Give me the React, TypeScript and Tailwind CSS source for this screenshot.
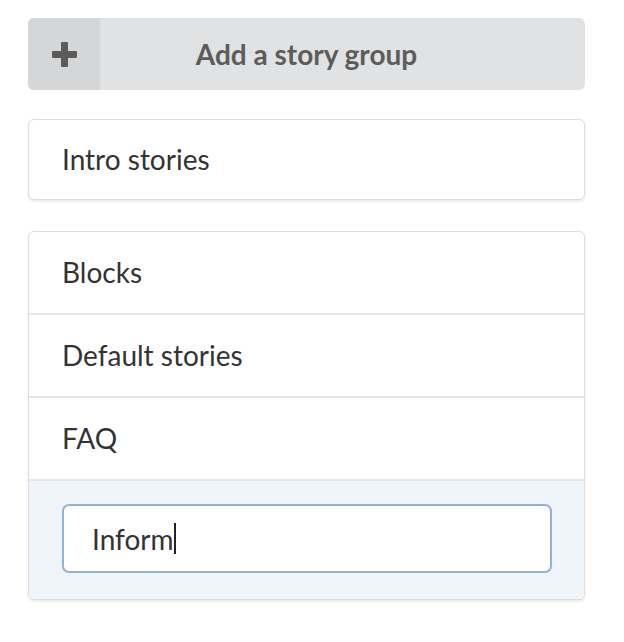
import React from "react";

export default function App() {
  const rows = ["Blocks", "Default stories", "FAQ"];
  return (
    <div className="w-[624px] h-[642px] bg-white font-['Lato','Noto_Sans',sans-serif] px-[28px] pt-[18px] text-[#333333]">
      <div className="w-[557px] h-[72px] rounded-[6px] bg-[#e1e2e4] flex overflow-hidden relative">
        <div className="w-[72px] h-full bg-[#d5d6d8] flex items-center justify-center">
          <svg width="25" height="25" viewBox="0 0 25 25">
            <rect x="9" y="0" width="7" height="25" rx="1" fill="#5b5b5b" />
            <rect x="0" y="9" width="25" height="7" rx="1" fill="#5b5b5b" />
          </svg>
        </div>
        <div className="absolute inset-0 flex items-center justify-center pointer-events-none">
          <span className="text-[28px] font-bold text-[#5c5c5c]">Add a story group</span>
        </div>
      </div>

      <div className="mt-[29px] w-[557px] h-[81px] rounded-[6px] border border-[#dcdcdc] bg-white shadow-[0_2px_3px_rgba(0,0,0,0.08)] flex items-center pl-[33px] pb-[2px]">
        <span className="text-[28px]">Intro stories</span>
      </div>

      <div className="mt-[31px] w-[557px] rounded-[6px] border border-[#dcdcdc] bg-white shadow-[0_2px_3px_rgba(0,0,0,0.08)] overflow-hidden">
        {rows.map((r) => (
          <div key={r} className="h-[83px] border-b-2 border-[#e6e6e6] flex items-center pl-[33px] pb-[2px]">
            <span className="text-[28px]">{r}</span>
          </div>
        ))}
        <div className="bg-[#eff4fb] pt-[23px] pb-[26px] pl-[33px] pr-[32px]">
          <div className="h-[69px] rounded-[7px] border-2 border-[#8fb3d8] bg-white flex items-center pl-[28px]">
            <span className="text-[28px] text-[#333333]">Inform</span>
            <span className="w-[2px] h-[31px] bg-[#222222] ml-[1px]" />
          </div>
        </div>
      </div>
    </div>
  );
}
